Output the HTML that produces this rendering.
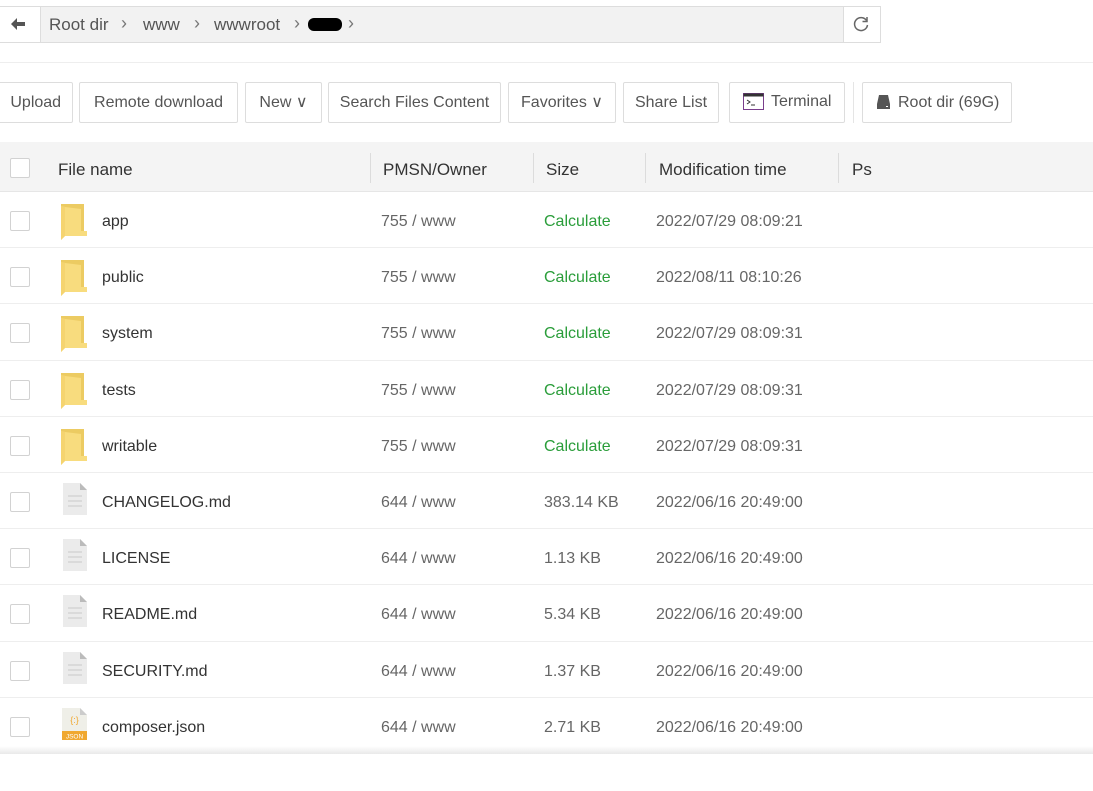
<!DOCTYPE html>
<html><head><meta charset="utf-8"><style>
*{box-sizing:border-box;margin:0;padding:0}
body{width:1093px;height:791px;background:#fff;font-family:"Liberation Sans",sans-serif;color:#555;position:relative;overflow:hidden;font-size:15px}
.a{position:absolute}
.crumb{left:0;top:6px;width:881px;height:37px;border:1px solid #ddd;background:#f2f2f2}
.back{left:0;top:6px;width:41px;height:37px;background:#fff;border:1px solid #ddd;border-left:none}
.ref{left:843px;top:6px;width:38px;height:37px;background:#fff;border:1px solid #ddd}
.ct{top:15px;font-size:17px;color:#555}
.sep{top:13px;color:#777;font-size:18px}
.btn{top:82px;height:41px;border:1px solid #ddd;border-radius:2px;background:#fff;font-size:16px;color:#555;line-height:40px;text-align:center;white-space:nowrap}
.hdr{left:0;top:142px;width:1093px;height:50px;background:#f4f4f4;border-bottom:1px solid #e6e6e6}
.hd{top:160px;font-size:17px;color:#333}
.dv{top:153px;width:1px;height:30px;background:#dcdcdc}
.row{left:0;width:1093px;border-bottom:1px solid #eee}
.cb{left:10px;width:20px;height:20px;border:1px solid #d2d2d2;border-radius:2px;background:#fff}
.t{font-size:16px;color:#666;white-space:nowrap}
.nm{color:#333}
.gr{color:#2a9d3a}
</style></head><body>
<div class="a crumb"></div>
<div class="a back"></div>
<svg class="a" style="left:10px;top:17px" width="16" height="14" viewBox="0 0 16 14"><path d="M1 7 L7 1 L7 5 L15 5 L15 9 L7 9 L7 13 Z" fill="#555"/></svg>
<div class="a ct" style="left:49px">Root dir</div>
<div class="a sep" style="left:121px">&#x203A;</div>
<div class="a ct" style="left:143px">www</div>
<div class="a sep" style="left:194px">&#x203A;</div>
<div class="a ct" style="left:214px">wwwroot</div>
<div class="a sep" style="left:294px">&#x203A;</div>
<div class="a" style="left:308px;top:18px;width:34px;height:13px;background:#000;border-radius:6px"></div>
<div class="a sep" style="left:348px">&#x203A;</div>
<div class="a ref"></div>
<svg class="a" style="left:852px;top:15px" width="18" height="18" viewBox="0 0 18 18"><path d="M14.5 5.5 A6.5 6.5 0 1 0 15.5 10" fill="none" stroke="#666" stroke-width="1.5"/><path d="M15 2 L15 6.5 L10.5 6.5" fill="none" stroke="#666" stroke-width="1.5"/></svg>
<div class="a" style="left:0;top:62px;width:1093px;height:1px;background:#eee"></div>
<div class="a btn" style="left:-6px;width:79px">&nbsp;Upload</div>
<div class="a btn" style="left:79px;width:159px">Remote download</div>
<div class="a btn" style="left:245px;width:77px">New &#x2228;</div>
<div class="a btn" style="left:328px;width:173px">Search Files Content</div>
<div class="a btn" style="left:508px;width:108px">Favorites &#x2228;</div>
<div class="a btn" style="left:623px;width:96px">Share List</div>
<div class="a btn" style="left:729px;width:116px;text-align:left;padding-left:41px;line-height:38px">Terminal</div>
<svg class="a" style="left:743px;top:93px" width="21" height="17" viewBox="0 0 21 17"><rect x="0.5" y="0.5" width="20" height="16" fill="#fff" stroke="#7a3e8c"/><rect x="0.5" y="0.5" width="20" height="3" fill="#333"/><path d="M4 7 L7 9 L4 11 M8 12 L12 12" stroke="#333" fill="none"/></svg>
<div class="a" style="left:853px;top:82px;width:1px;height:41px;background:#e5e5e5"></div>
<div class="a btn" style="left:862px;width:150px;text-align:left;padding-left:35px">Root dir (69G)</div>
<svg class="a" style="left:876px;top:95px" width="15" height="14" viewBox="0 0 15 14"><path d="M3 0 H12 L14 9 H1 Z" fill="#555"/><rect x="1" y="9" width="13" height="5" fill="#555"/><rect x="10" y="11" width="2" height="1" fill="#fff"/></svg>

<div class="a hdr"></div>
<div class="a cb" style="top:158px"></div>
<div class="a hd" style="left:58px">File name</div>
<div class="a dv" style="left:370px"></div>
<div class="a hd" style="left:383px">PMSN/Owner</div>
<div class="a dv" style="left:533px"></div>
<div class="a hd" style="left:546px">Size</div>
<div class="a dv" style="left:645px"></div>
<div class="a hd" style="left:659px">Modification time</div>
<div class="a dv" style="left:838px"></div>
<div class="a hd" style="left:852px">Ps</div>

<div id="rows"></div>
<script>
var d=[["app","755 / www","Calculate","2022/07/29 08:09:21","f"],["public","755 / www","Calculate","2022/08/11 08:10:26","f"],["system","755 / www","Calculate","2022/07/29 08:09:31","f"],["tests","755 / www","Calculate","2022/07/29 08:09:31","f"],["writable","755 / www","Calculate","2022/07/29 08:09:31","f"],["CHANGELOG.md","644 / www","383.14 KB","2022/06/16 20:49:00","d"],["LICENSE","644 / www","1.13 KB","2022/06/16 20:49:00","d"],["README.md","644 / www","5.34 KB","2022/06/16 20:49:00","d"],["SECURITY.md","644 / www","1.37 KB","2022/06/16 20:49:00","d"],["composer.json","644 / www","2.71 KB","2022/06/16 20:49:00","j"]];
var h="";
d.forEach(function(r,i){var top=192+i*56.2,c=top+29;
h+='<div class="a row" style="top:'+top+'px;height:56.2px"></div>';
h+='<div class="a cb" style="top:'+(c-10)+'px"></div>';
var it=c-19;
if(r[4]=="f")h+='<svg class="a" style="left:60px;top:'+(it+1)+'px" width="28" height="37" viewBox="0 0 28 37"><path d="M1 1 H24 V30 H1 Z" fill="#eccb62"/><path d="M5 4 L21 6 V28 L27 28 V33 L5 33 L1 37 V3 Z" fill="#f8dc7e"/><path d="M1 3 L5 4 V33 L1 37 Z" fill="#f5d470"/></svg>';
else if(r[4]=="d")h+='<svg class="a" style="left:63px;top:'+it+'px" width="24" height="32" viewBox="0 0 24 32"><path d="M0 0 H17 L24 7 V32 H0 Z" fill="#ebebeb"/><path d="M17 0 L24 7 H17 Z" fill="#bbb"/><path d="M5 13 H19 M5 18 H19 M5 23 H19" stroke="#d0d0d0" stroke-width="1.2"/></svg>';
else h+='<svg class="a" style="left:62px;top:'+it+'px" width="25" height="32" viewBox="0 0 25 32"><path d="M0 0 H18 L25 7 V32 H0 Z" fill="#efefe8"/><path d="M18 0 L25 7 H18 Z" fill="#ccc"/><rect x="0" y="23" width="25" height="9" fill="#f0a830"/><text x="12.5" y="30.5" font-size="6.5" fill="#fff" text-anchor="middle" font-family="Liberation Sans">JSON</text><text x="12.5" y="15" font-size="9" fill="#f0a830" text-anchor="middle" font-family="Liberation Sans">{:}</text></svg>';
var ty=c-8;
h+='<div class="a t nm" style="left:102px;top:'+ty+'px">'+r[0]+'</div>';
h+='<div class="a t" style="left:381px;top:'+ty+'px">'+r[1]+'</div>';
h+='<div class="a t'+(r[2]=="Calculate"?" gr":"")+'" style="left:544px;top:'+ty+'px">'+r[2]+'</div>';
h+='<div class="a t" style="left:656px;top:'+ty+'px">'+r[3]+'</div>';
});
document.getElementById("rows").innerHTML=h;
</script>
<div class="a" style="left:0;top:746px;width:1093px;height:8px;background:linear-gradient(#fff,#e9e9e9)"></div>
</body></html>
